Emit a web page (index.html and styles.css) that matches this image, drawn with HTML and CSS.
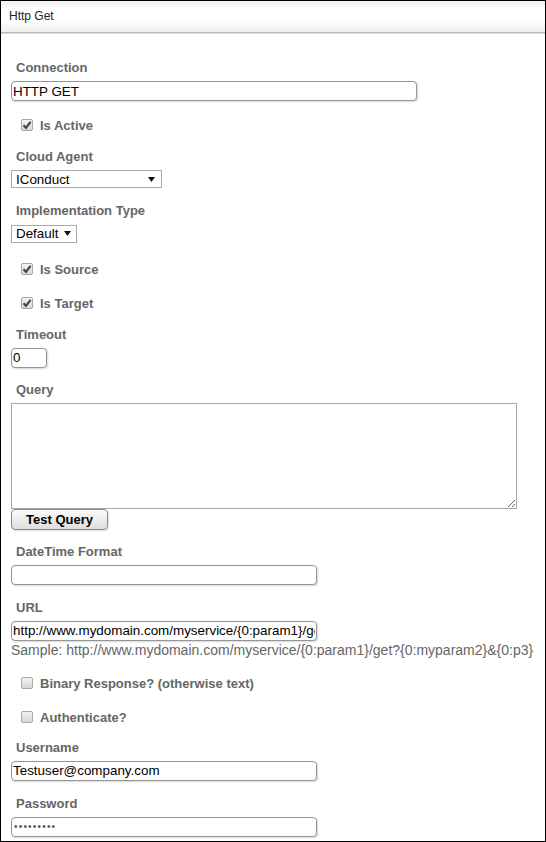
FILE: index.html
```html
<!DOCTYPE html>
<html lang="en">
<head>
<meta charset="utf-8">
<title>Http Get</title>
<link rel="stylesheet" href="styles.css">
</head>
<body>
<div class="panel">
  <div class="header">Http Get</div>
  <form class="form">
    <div class="group g-connection">
      <label class="label">Connection</label>
      <input class="text w-wide" type="text" value="HTTP GET">
    </div>

    <div class="check-row r-active">
      <span class="cbox checked"><svg width="10" height="10" viewBox="0 0 10 10"><path d="M1.5 5.2 L4 7.8 L8.6 1.8" fill="none" stroke="#444" stroke-width="2.2"/></svg></span>
      <span class="check-label">Is Active</span>
    </div>

    <div class="group g-agent">
      <label class="label">Cloud Agent</label>
      <div class="select s-agent"><span>IConduct</span><svg class="arrow" width="7" height="5" viewBox="0 0 7 5"><polygon points="0,0 7,0 3.5,5" fill="#111"/></svg></div>
    </div>

    <div class="group g-impl">
      <label class="label">Implementation Type</label>
      <div class="select s-impl"><span>Default</span><svg class="arrow" width="7" height="5" viewBox="0 0 7 5"><polygon points="0,0 7,0 3.5,5" fill="#111"/></svg></div>
    </div>

    <div class="check-row r-source">
      <span class="cbox checked"><svg width="10" height="10" viewBox="0 0 10 10"><path d="M1.5 5.2 L4 7.8 L8.6 1.8" fill="none" stroke="#444" stroke-width="2.2"/></svg></span>
      <span class="check-label">Is Source</span>
    </div>

    <div class="check-row r-target">
      <span class="cbox checked"><svg width="10" height="10" viewBox="0 0 10 10"><path d="M1.5 5.2 L4 7.8 L8.6 1.8" fill="none" stroke="#444" stroke-width="2.2"/></svg></span>
      <span class="check-label">Is Target</span>
    </div>

    <div class="group g-timeout">
      <label class="label">Timeout</label>
      <input class="text w-tiny" type="text" value="0">
    </div>

    <div class="group g-query">
      <label class="label">Query</label>
      <textarea class="query"></textarea>
      <button class="btn" type="button">Test Query</button>
    </div>

    <div class="group g-date">
      <label class="label">DateTime Format</label>
      <input class="text w-mid" type="text" value="">
    </div>

    <div class="group g-url">
      <label class="label">URL</label>
      <input class="text w-mid" type="text" value="http://www.mydomain.com/myservice/{0:param1}/get?{0:myparam2}&amp;{0:p3}">
      <div class="sample">Sample: http://www.mydomain.com/myservice/{0:param1}/get?{0:myparam2}&amp;{0:p3}</div>
    </div>

    <div class="check-row r-binary">
      <span class="cbox"></span>
      <span class="check-label">Binary Response? (otherwise text)</span>
    </div>

    <div class="check-row r-auth">
      <span class="cbox"></span>
      <span class="check-label">Authenticate?</span>
    </div>

    <div class="group g-user">
      <label class="label">Username</label>
      <input class="text w-mid" type="text" value="Testuser@company.com">
    </div>

    <div class="group g-pass">
      <label class="label">Password</label>
      <input class="text w-mid pass" type="password" value="123456789">
    </div>
  </form>
</div>
</body>
</html>
```

FILE: styles.css
```css
html, body {
  margin: 0;
  padding: 0;
  background: #fff;
}

.panel {
  box-sizing: border-box;
  width: 546px;
  height: 842px;
  border: 1px solid #000;
  overflow: hidden;
  font-family: "Liberation Sans", Arial, sans-serif;
}

.header {
  height: 31px;
  line-height: 30px;
  padding-left: 8px;
  font-size: 12px;
  color: #222;
  background: linear-gradient(#f0f0f0, #ffffff 25%, #ffffff 60%, #efefef);
  border-bottom: 1px solid #b9b9b9;
  box-shadow: 0 1px 0 #dcdcdc;
}

.form {
  margin: 0;
  padding: 27px 10px 0 10px;
}

.group {
  display: block;
}

.label {
  display: block;
  font-size: 13px;
  font-weight: bold;
  line-height: 16px;
  color: #666;
  padding-left: 5px;
  margin-bottom: 5px;
}

.text {
  display: block;
  box-sizing: border-box;
  height: 20px;
  margin: 0;
  padding: 0 1px;
  border: 1px solid #959595;
  border-radius: 4px;
  box-shadow: 1px 1px 2px rgba(0, 0, 0, 0.16);
  background: #fff;
  font-family: "Liberation Sans", Arial, sans-serif;
  font-size: 13.4px;
  color: #000;
  outline: none;
}

.pass {
  font-size: 10px;
  letter-spacing: 1.2px;
  color: #555;
  padding-left: 2px;
}

.w-wide { width: 406px; }
.w-mid { width: 306px; }
.w-tiny { width: 36px; }

.check-row {
  display: flex;
  align-items: flex-start;
  height: 16px;
  padding-left: 10px;
}

.cbox {
  box-sizing: border-box;
  width: 12px;
  height: 12px;
  margin-top: 1px;
  margin-right: 7px;
  border: 1px solid #a8a8a8;
  border-radius: 2px;
  background: linear-gradient(#f2f2f2, #d6d6d6);
  display: flex;
  align-items: center;
  justify-content: center;
}

.cbox svg {
  display: block;
}

.check-label {
  font-size: 13px;
  font-weight: bold;
  line-height: 16px;
  color: #666;
}

.select {
  box-sizing: border-box;
  height: 18px;
  border: 1px solid #a9a9a9;
  background: #fff;
  display: flex;
  align-items: center;
  font-size: 13.4px;
  color: #000;
  padding-left: 4px;
}

.s-agent {
  width: 151px;
  justify-content: space-between;
  padding-right: 6px;
}

.s-impl {
  display: inline-flex;
  gap: 6px;
  padding-right: 5px;
}

.arrow {
  display: block;
}

.query {
  display: block;
  box-sizing: border-box;
  width: 506px;
  height: 106px;
  margin: 0;
  border: 1px solid #a9a9a9;
  font-family: "Liberation Sans", Arial, sans-serif;
  font-size: 13px;
}

.btn {
  display: block;
  box-sizing: border-box;
  width: 97px;
  height: 21px;
  margin: 0;
  padding: 0;
  border: 1px solid #8a8a8a;
  border-radius: 4px;
  background: linear-gradient(#fafafa, #dedede);
  box-shadow: 1px 1px 1px rgba(0, 0, 0, 0.12);
  font-family: "Liberation Sans", Arial, sans-serif;
  font-size: 13px;
  font-weight: bold;
  color: #000;
}

.sample {
  font-size: 14px;
  line-height: 18px;
  color: #666;
  white-space: nowrap;
}

.r-active { margin-top: 17px; }
.g-agent { margin-top: 15px; }
.g-impl { margin-top: 15px; }
.r-source { margin-top: 19px; }
.r-target { margin-top: 18px; }
.g-timeout { margin-top: 15px; }
.g-query { margin-top: 14px; }
.g-date { margin-top: 14px; }
.g-url { margin-top: 15px; }
.r-binary { margin-top: 17px; }
.r-auth { margin-top: 18px; }
.g-user { margin-top: 14px; }
.g-pass { margin-top: 15px; }
```
